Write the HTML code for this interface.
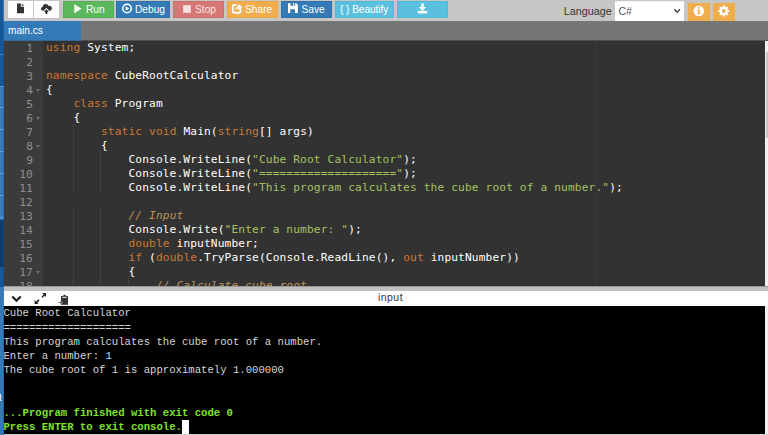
<!DOCTYPE html>
<html lang="en">
<head>
<meta charset="utf-8">
<title>Online C# Compiler</title>
<style>
*{box-sizing:border-box;margin:0;padding:0}
html,body{width:768px;height:435px;overflow:hidden;background:#c6c6c6;font-family:"Liberation Sans",sans-serif}
#app{position:relative;width:768px;height:435px;overflow:hidden}
.abs{position:absolute}
/* left strip (cut-off sidebar) */
#strip{left:0;top:0;z-index:5}
/* toolbar */
#toolbar{left:0;top:0;width:768px;height:21px;background:#c6c6c6}
.btn{position:absolute;top:1px;height:17px;color:#fff;font-size:10.2px;line-height:17px;white-space:nowrap;border:1px solid transparent}
.btn span{position:absolute;top:-1px}
.btn svg{position:absolute}
/* tabs */
#tabs{left:4px;top:21px;width:764px;height:19px;background:#757575}
#tab{left:0;top:0;width:77px;height:19px;background:#337ab7;color:#fff;font-size:10.1px;line-height:19px}
/* editor */
#editor{left:4px;top:40px;width:761px;height:246px;background:#323232;overflow:hidden}
#gutter{left:0;top:0;width:39px;height:246px;background:#3b3b3b}
.mono{font-family:"DejaVu Sans Mono","Liberation Mono",monospace;font-size:11.2px;letter-spacing:0.132px;line-height:14px;white-space:pre}
#nums{left:0;top:2px;width:29px;text-align:right;color:#8f8f8f}
#code{left:42px;top:1px;color:#fff}
.k{color:#cc7833}.s{color:#a5c261}.c{color:#bc9458;font-style:italic}
.fold{position:absolute;left:32px;width:0;height:0;border-left:2.5px solid transparent;border-right:2.5px solid transparent;border-top:3px solid #707070}
.guide{position:absolute;width:1px;background-image:linear-gradient(#505050 50%,transparent 50%);background-size:1px 2px}
/* scrollbars */
.sb{left:765px;width:3px;background:#f1f1f1}
/* splitter + console header */
#split{left:4px;top:286px;width:764px;height:5px;background:#c0c0c0;border-top:1px solid #999}
#chead{left:4px;top:291px;width:764px;height:15px;background:#fff}
#console{left:4px;top:306px;width:761px;height:128px;background:#000;color:#d6d6d6}
.term{font-family:"Liberation Mono",monospace;font-size:10.64px;line-height:14.25px;white-space:pre}
.g{color:#7fe329;font-weight:bold}
</style>
</head>
<body>
<div id="app">
  <div class="abs" style="left:3px;top:21px;width:1px;height:20px;background:#337ab7"></div>
  <div class="abs" style="left:3px;top:41px;width:1px;height:245px;background:#3b3b3b"></div>
  <div class="abs" style="left:3px;top:286px;width:1px;height:5px;background:#c0c0c0"></div>
  <div class="abs" style="left:3px;top:291px;width:1px;height:15px;background:#fff"></div>
  <div class="abs" style="left:3px;top:306px;width:1px;height:129px;background:#000"></div>
  <svg id="strip" class="abs" width="4" height="435" viewBox="0 0 4 435">
    <rect x="0" y="0" width="3.700" height="435" fill="#15589a"/>
    <rect x="0" y="54" width="3.700" height="1" fill="#3f7db8"/>
    <rect x="0" y="86" width="3.700" height="134" fill="#337bbb"/>
    <rect x="0" y="86" width="3.700" height="1" fill="#5f95c8"/>
    <rect x="0" y="107" width="3.700" height="1" fill="#6a9ccb"/>
    <rect x="0" y="129" width="3.700" height="1" fill="#6a9ccb"/>
    <rect x="0" y="151" width="3.700" height="1" fill="#6a9ccb"/>
    <rect x="0" y="173" width="3.700" height="1" fill="#6a9ccb"/>
    <rect x="0" y="195" width="3.700" height="1" fill="#6a9ccb"/>
    <rect x="0" y="217" width="3.700" height="1" fill="#6a9ccb"/>
    <rect x="0" y="220" width="3.700" height="47" fill="#0f3d6b"/>
    <rect x="0" y="287" width="3.700" height="148" fill="#337ab7"/>
    <rect x="0" y="394" width="1" height="7" fill="#dfe6ee"/>
    <rect x="0" y="396" width="2" height="1" fill="#b9cde2"/>
    <rect x="0" y="400" width="2" height="1" fill="#b9cde2"/>
  </svg>

  <div id="toolbar" class="abs">
    <div class="btn" style="left:8px;width:25px;background:#fff"></div>
    <div class="btn" style="left:34px;width:25px;background:#fff"></div>
    <div class="btn" style="left:63px;width:51px;background:#5cb85c;border-color:#52b052"><span style="left:22px">Run</span></div>
    <div class="btn" style="left:116px;width:54px;background:#337ab7;border-color:#2f72ab"><span style="left:18px">Debug</span></div>
    <div class="btn" style="left:173px;width:51px;background:#d67876;border-color:#d36d6a"><span style="left:21px;color:#f6e4e3">Stop</span></div>
    <div class="btn" style="left:227px;width:51px;background:#f0ad4e;border-color:#eea73f"><span style="left:17px">Share</span></div>
    <div class="btn" style="left:281px;width:51px;background:#337ab7;border-color:#2f72ab"><span style="left:19.5px">Save</span></div>
    <div class="btn" style="left:335px;width:59px;background:#5bc0de;border-color:#4fbbdb"><span style="left:4px;letter-spacing:-.08px">{ } Beautify</span></div>
    <div class="btn" style="left:397px;width:51px;background:#5bc0de;border-color:#4fbbdb"></div>
    <svg class="abs" style="left:0;top:0" width="768" height="21" viewBox="0 0 768 21">
      <!-- file -->
      <path d="M17 3.4h3.8v3.3h3.2v6.500h-7z M21.700 3.400l2.300 2.400h-2.300z" fill="#333"/>
      <!-- cloud upload -->
      <path d="M43.2 10.8c-1.3 0-2.2-.9-2.2-2 0-1 .7-1.800 1.700-2 .1-1.600 1.400-2.800 3-2.800 1.300 0 2.400.8 2.800 1.900.3-.1.600-.2.900-.2 1.400 0 2.500 1.100 2.500 2.500 0 1.500-1.100 2.600-2.500 2.600z" fill="#333"/>
      <path d="M43.300 11.200l3.100-3.400 3.100 3.400z" fill="#fff"/>
      <path d="M43.900 11.900l2.500-2.600 2.500 2.600h-1.500v2.100h-2v-2.100z" fill="#333"/>
      <!-- run -->
      <path d="M74.300 4.300l7.300 4.450-7.300 4.450z" fill="#fff"/>
      <!-- debug: play-circle-o -->
      <circle cx="127" cy="8.500" r="4.300" fill="none" stroke="#fff" stroke-width="1.500"/>
      <path d="M125.600 6.200l3.700 2.300-3.700 2.300z" fill="#fff"/>
      <!-- stop -->
      <rect x="183.200" y="5.200" width="7.600" height="7.600" fill="#f6e4e3"/>
      <!-- share -->
      <path d="M240.600 10v1.500c0 .7-.5 1.200-1.200 1.200h-5.400c-.7 0-1.200-.5-1.200-1.200v-5.400c0-.7.500-1.200 1.200-1.200h2" fill="none" stroke="#fff" stroke-width="1.900" stroke-linecap="round"/>
      <path d="M238.700 3.800l3.600 3.500-3.600 3.500v-2c-1.700 0-2.700.4-3.500 1.700 0-2.500 1.300-4.500 3.500-4.700z" fill="#fff"/>
      <!-- save (floppy) -->
      <path d="M288 3.200h8.200l1.700 1.700v8h-9.900z" fill="#fff"/>
      <rect x="290.400" y="3.200" width="4.800" height="2.500" fill="#337ab7"/>
      <rect x="293" y="3.400" width="1.300" height="1.700" fill="#fff"/>
      <rect x="290.200" y="9.300" width="4.800" height="3.600" fill="#337ab7"/>
      <!-- download -->
      <path d="M421.200 3.600h2.600v3.400h2.400l-3.700 3.900-3.700-3.900h2.400z" fill="#fff"/>
      <rect x="417.800" y="10.900" width="9.400" height="2.500" fill="#fff"/>
    </svg>
    <div class="abs" style="left:563.700px;top:4px;font-size:10.8px;line-height:14px;color:#333">Language</div>
    <div class="abs" style="left:615px;top:1px;width:69.400px;height:20px;background:linear-gradient(#e9e9e9,#fff 1px);border-radius:1px 1px 0 0"><span class="abs" style="left:3.500px;top:3px;font-size:10.5px;line-height:14px;color:#555">C#</span></div>
    <svg class="abs" style="left:670px;top:0" width="20" height="21" viewBox="670 0 20 21"><path d="M674.400 9.300l2.800 2.900 2.800-2.900" fill="none" stroke="#444" stroke-width="1.400"/></svg>
    <div class="abs" style="left:688px;top:3px;width:22px;height:18px;background:#f0ad4e"></div>
    <div class="abs" style="left:713px;top:3px;width:22px;height:18px;background:#f0ad4e"></div>
    <svg class="abs" style="left:688px;top:0" width="50" height="21" viewBox="688 0 50 21">
      <circle cx="698.800" cy="11" r="5.300" fill="#fff"/>
      <rect x="698" y="6.900" width="1.700" height="1.700" fill="#f0ad4e"/>
      <path d="M697.200 9.600h2.500v3.600h.8v1.100h-3.300v-1.100h.8v-2.500h-.8z" fill="#f0ad4e"/>
      <g fill="#fff" transform="translate(723.800 11)">
        <circle r="3.900"/>
        <g id="t"><rect x="-1.100" y="-5.400" width="2.200" height="10.800"/></g>
        <rect x="-1.100" y="-5.400" width="2.200" height="10.800" transform="rotate(45)"/>
        <rect x="-1.100" y="-5.400" width="2.200" height="10.800" transform="rotate(90)"/>
        <rect x="-1.100" y="-5.400" width="2.200" height="10.800" transform="rotate(135)"/>
        <circle r="1.900" fill="#f0ad4e"/>
      </g>
    </svg>
  </div>

  <div id="tabs" class="abs">
    <div id="tab" class="abs"><span class="abs" style="left:4px;top:0">main.cs</span></div>
  </div>

  <div id="editor" class="abs">
    <div id="gutter" class="abs">
<div id="nums" class="abs mono">1
2
3
4
5
6
7
8
9
10
11
12
13
14
15
16
17
18</div>
      <i class="fold" style="top:49px"></i>
      <i class="fold" style="top:77px"></i>
      <i class="fold" style="top:105px"></i>
      <i class="fold" style="top:231px"></i>
    </div>
    <i class="guide" style="left:69px;top:84px;height:70px"></i>
    <i class="guide" style="left:69px;top:168px;height:78px"></i>
    <i class="guide" style="left:96px;top:112px;height:42px"></i>
    <i class="guide" style="left:96px;top:168px;height:78px"></i>
    <i class="guide" style="left:124px;top:238px;height:8px"></i>
    <i class="abs" style="left:591px;top:0;width:2px;height:246px;background:#363636"></i>
<div id="code" class="abs mono"><span class="k">using</span> System;

<span class="k">namespace</span> CubeRootCalculator
{
    <span class="k">class</span> Program
    {
        <span class="k">static</span> <span class="k">void</span> Main(<span class="k">string</span>[] args)
        {
            Console.WriteLine(<span class="s">"Cube Root Calculator"</span>);
            Console.WriteLine(<span class="s">"===================="</span>);
            Console.WriteLine(<span class="s">"This program calculates the cube root of a number."</span>);

            <span class="c">// Input</span>
            Console.Write(<span class="s">"Enter a number: "</span>);
            <span class="k">double</span> inputNumber;
            <span class="k">if</span> (<span class="k">double</span>.TryParse(Console.ReadLine(), <span class="k">out</span> inputNumber))
            {
                <span class="c">// Calculate cube root</span></div>
  </div>
  <div class="abs sb" style="top:40px;height:246px"><div class="abs" style="left:0;top:12px;width:3px;height:86px;background:linear-gradient(90deg,#e3e3e3 0,#e3e3e3 33%,#d2d2d2 33%,#d2d2d2 67%,#c1c1c1 67%)"></div></div>
  <div class="abs" style="left:81px;top:40px;width:687px;height:1px;background:#505050"></div>
  <div class="abs" style="left:4px;top:40px;width:77px;height:1px;background:#34689a"></div>

  <div id="split" class="abs"></div>
  <div id="chead" class="abs"><svg class="abs" style="left:0;top:0" width="80" height="15" viewBox="4 291 80 15">
      <path d="M12.300 296.500l4.200 4.200 4.200-4.200" fill="none" stroke="#222" stroke-width="2.300"/>
      <path d="M42 297.200l2.500-2.500" stroke="#222" stroke-width="1.600" fill="none"/>
      <path d="M42.100 293h3.900v3.900z" fill="#222"/>
      <path d="M39 299.900l-2.700 2.700" stroke="#222" stroke-width="1.600" fill="none"/>
      <path d="M38.500 304h-3.900v-3.900z" fill="#222"/>
      <path d="M61 296h7v8.800h-7z" fill="#333"/>
      <path d="M63 296.900h3v-1.200l-1.500-1.300-1.500 1.300z" fill="#333"/>
      <rect x="62.300" y="296.800" width="4.400" height="1" fill="#fff"/>
      <path d="M58 302h2.300v-1.500l2.300 2-2.300 2v-1.500h-2.300z" fill="#333" stroke="#fff" stroke-width=".5"/>
    </svg><span class="abs" style="left:374px;top:-1px;font-size:10.5px;letter-spacing:.45px;line-height:14px;color:#333">input</span></div>
  <div id="console" class="abs"><div class="abs term" style="left:-.6px;top:0">Cube Root Calculator
<span style="position:relative;top:1px">====================</span>
This program calculates the cube root of a number.
Enter a number: 1
The cube root of 1 is approximately 1.000000


<span class="g">...Program finished with exit code 0</span>
<span class="g">Press ENTER to exit console.</span></div><i class="abs" style="left:178px;top:114px;width:6.500px;height:14px;background:#fff"></i></div>
  <div class="abs sb" style="top:306px;height:129px"></div>
  <div class="abs" style="left:4px;top:434px;width:764px;height:1px;background:#d0d0d0"></div>
</div>
</body>
</html>
